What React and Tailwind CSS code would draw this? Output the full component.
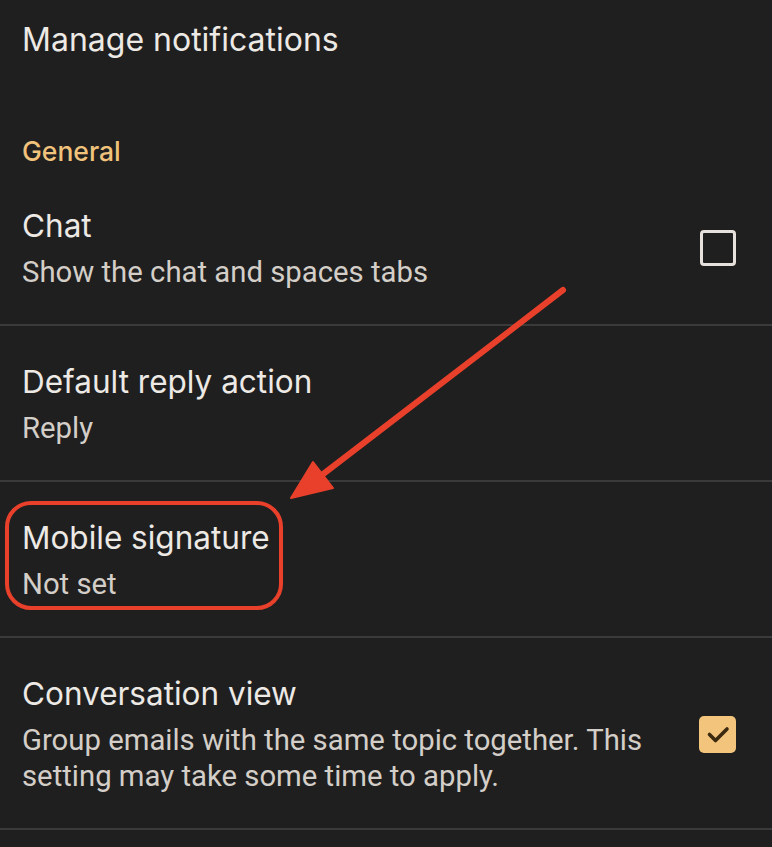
import React from "react";

const titleFont = { fontFamily: "Inter, 'Noto Sans', sans-serif" };
const bodyFont = { fontFamily: "Roboto, 'Noto Sans', sans-serif" };

const Checkbox = ({ checked }) =>
  checked ? (
    <div className="w-[37px] h-[37px] rounded-[5px] bg-[#f2c47c] flex items-center justify-center shrink-0">
      <svg width="28" height="28" viewBox="0 0 28 28" fill="none">
        <path d="M5.5 14.5l6 6L23 9" stroke="#3b2a10" strokeWidth="3.6" strokeLinecap="round" strokeLinejoin="round" />
      </svg>
    </div>
  ) : (
    <div className="w-[36px] h-[36px] rounded-[4px] border-[3px] border-[#e6e1dc] shrink-0" />
  );

// one settings row, divider runs across the full width
const SettingRow = ({ title, sub, checkbox, checked, first }) => (
  <div className={"flex items-center border-b-2 border-[#3a3a3a] pl-[22px] pr-[36px] pb-[34px] " + (first ? "pt-[37px]" : "pt-[36px]")}>
    <div className="flex-1 min-w-0">
      <div className="text-[31.5px] leading-[40px] text-[#ede9e5]" style={titleFont}>{title}</div>
      <div className="mt-[8px] text-[29.3px] leading-[36px] text-[#d4cec8] pr-[40px]" style={bodyFont}>{sub}</div>
    </div>
    {checkbox && <Checkbox checked={checked} />}
  </div>
);

export default function App() {
  return (
    <div className="relative w-[772px] h-[847px] bg-[#1f1f1f] overflow-hidden">
      <div className="pl-[22px]">
        <div className="pt-[20px] text-[32px] leading-[40px] text-[#ede9e5]" style={titleFont}>
          Manage notifications
        </div>
        <div className="mt-[73px] text-[26.5px] leading-[36px] font-medium text-[#f0c27b]" style={titleFont}>
          General
        </div>
      </div>
      <div>
        <SettingRow first title="Chat" sub="Show the chat and spaces tabs" checkbox checked={false} />
        <SettingRow title="Default reply action" sub="Reply" />
        <SettingRow title="Mobile signature" sub="Not set" />
        <SettingRow
          title="Conversation view"
          sub="Group emails with the same topic together. This setting may take some time to apply."
          checkbox
          checked
        />
      </div>

      {/* annotation: highlight box */}
      <div className="absolute left-[5px] top-[501px] w-[278px] h-[109px] rounded-[26px] border-[4px] border-[#e8402b]" />

      {/* annotation: arrow */}
      <svg className="absolute left-0 top-0" width="772" height="847" viewBox="0 0 772 847">
        <line x1="563" y1="290" x2="318" y2="478" stroke="#e8402b" strokeWidth="6" strokeLinecap="round" />
        <polygon points="291,498 313,462 333,488" fill="#e8402b" stroke="#e8402b" strokeWidth="2" strokeLinejoin="round" />
      </svg>
    </div>
  );
}
